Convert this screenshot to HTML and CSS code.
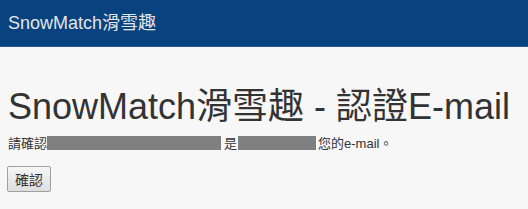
FILE: index.html
```html
<!DOCTYPE html>
<html>
<head>
<meta charset="utf-8">
<link rel="stylesheet" href="styles.css">
</head>
<body>
<nav class="navbar">
  <a class="brand" href="#">SnowMatch滑雪趣</a>
</nav>
<main class="container">
  <h1 class="title">SnowMatch滑雪趣 - 認證E-mail</h1>
  <p class="message">請確認<span class="redact redact-email"></span>是<span class="redact redact-name"></span>您的e-mail。</p>
  <button class="btn" type="button">確認</button>
</main>
</body>
</html>
```
FILE: styles.css
```css
html, body {
  margin: 0;
  padding: 0;
}
body {
  background: #f7f7f7;
  color: #333;
  font-family: "Liberation Sans", Arial, "Noto Sans CJK TC", sans-serif;
  font-size: 13px;
  line-height: 1.42857;
}
.navbar {
  height: 46px;
  background: #08427f;
  border-bottom: 1px solid #2a5b91;
  display: flex;
  align-items: center;
  padding: 0 8px;
}
.brand {
  color: #e4e4e4;
  font-size: 18px;
  text-decoration: none;
  line-height: 20px;
}
.container {
  padding: 0 8px;
}
.title {
  font-weight: normal;
  font-size: 36px;
  line-height: 1.1;
  margin: 40px 0 8px;
}
.message {
  margin: 0 0 13px;
}
.redact {
  display: inline-block;
  background: #808080;
  height: 14px;
  vertical-align: -2px;
}
.redact-email { width: 174px; margin-right: 3px; }
.redact-name { width: 78px; margin-left: 1px; margin-right: 2px; }
.btn {
  font-family: inherit;
  font-size: 14px;
  color: #333;
  background: linear-gradient(#f6f6f6, #dedede);
  border: 1px solid #a0a0a0;
  border-radius: 2px;
  padding: 2px 7px;
  margin-left: -1px;
}
```
